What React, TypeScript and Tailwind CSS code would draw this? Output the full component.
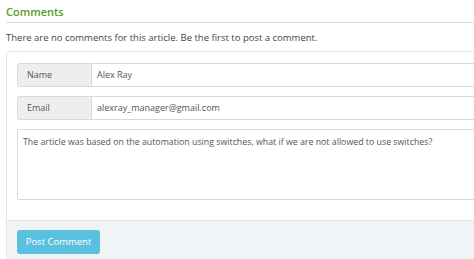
import React from 'react';

const fields = [
  { label: "Name", value: "Alex Ray" },
  { label: "Email", value: "alexray_manager@gmail.com" },
];

const App = () => {
  return (
    <div className="w-[474px] h-[259px] overflow-hidden bg-white font-['Open_Sans',sans-serif]">
      <div className="w-[520px] pl-[6px] pt-[4px]">
        {/* Heading */}
        <h2 className="text-[11px] font-semibold text-[#5a9a2f] leading-[15px] pb-[3px] border-b border-[#dedede]">
          Comments
        </h2>
        <p className="text-[9.5px] text-[#444] leading-[13px] mt-[8px]">
          There are no comments for this article. Be the first to post a comment.
        </p>

        {/* Form card */}
        <div className="mt-[7px] w-[490px] border border-[#e6e6e6] rounded-sm">
          <div className="px-[10px] pt-[11px] pb-[20px] flex flex-col gap-[9px]">
            {fields.map((f) => (
              <div key={f.label} className="flex h-[24px] text-[9px] text-[#555]">
                <div className="w-[75px] flex items-center pl-[9px] bg-[#eeeeee] border border-[#d9d9d9] rounded-l-[3px]">
                  {f.label}
                </div>
                <div className="flex-1 flex items-center pl-[5px] bg-white border border-l-0 border-[#d9d9d9]">
                  {f.value}
                </div>
              </div>
            ))}
            <div className="h-[71px] border border-[#d9d9d9] rounded-[2px] px-[5px] pt-[6px] text-[8.8px] text-[#555] leading-[13px]">
              The article was based on the automation using switches, what if we are not allowed to use switches?
            </div>
          </div>
          <div className="bg-[#f1f4f7] border-t border-[#e3e3e3] px-[10px] pt-[6px] pb-[8px]">
            <button className="h-[24px] w-[83px] rounded-[3px] bg-[#5bc0de] text-white text-[9.5px] leading-none">
              Post Comment
            </button>
          </div>
        </div>
      </div>
    </div>
  );
};

export default App;
